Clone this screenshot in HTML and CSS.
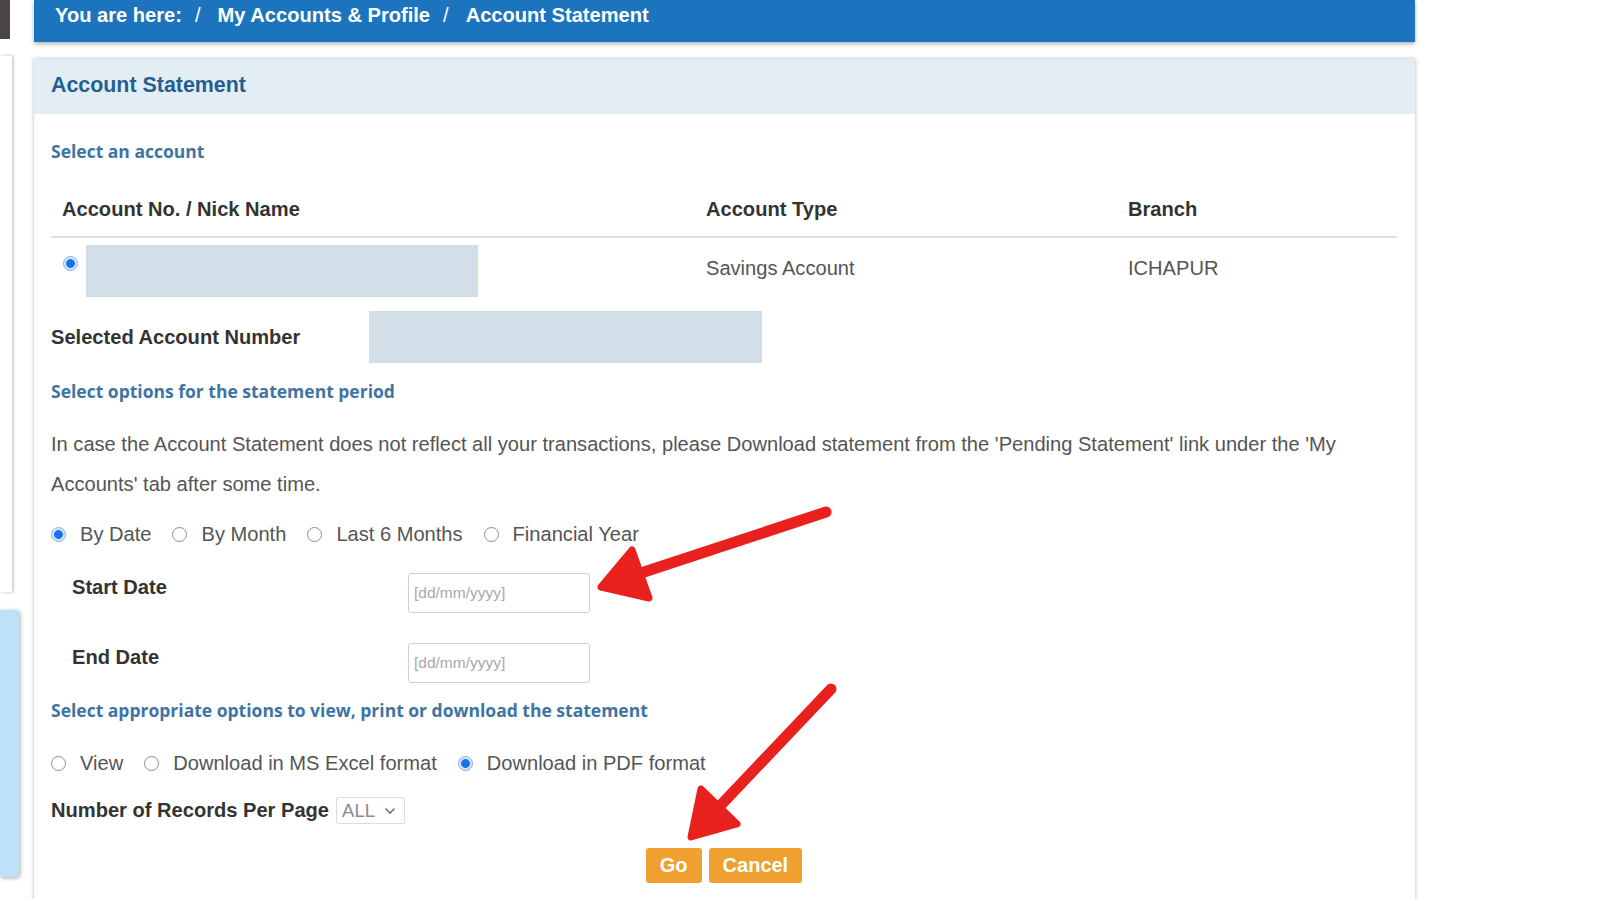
FILE: index.html
```html
<!DOCTYPE html>
<html lang="en">
<head>
    <meta charset="utf-8">
    <meta name="viewport" content="width=device-width, initial-scale=1">
    <title>Account Statement</title>
    <link rel="stylesheet" href="styles.css">
</head>
<body>
    <div class="side">
        <div class="side-top"></div>
        <div class="side-menu"></div>
        <div class="side-info"></div>
    </div>

    <div class="main">
        <div class="crumbs">
            <span>You are here:</span>
            <span class="sep">/</span>
            <span>My Accounts &amp; Profile</span>
            <span class="sep">/</span>
            <span>Account Statement</span>
        </div>

        <div class="card">
            <div class="card-head">Account Statement</div>
            <div class="card-body">
                <div class="subhead first">Select an account</div>

                <div class="acc-table">
                    <div class="th">Account No. / Nick Name</div>
                    <div class="th">Account Type</div>
                    <div class="th">Branch</div>

                    <div class="td acc-cell">
                        <input type="radio" class="radio" name="acc" checked>
                        <div class="masked acc-mask"></div>
                    </div>
                    <div class="td">Savings Account</div>
                    <div class="td">ICHAPUR</div>
                </div>

                <div class="selected-row">
                    <div class="label">Selected Account Number</div>
                    <div class="masked sel-mask"></div>
                </div>

                <div class="subhead">Select options for the statement period</div>

                <p class="note">In case the Account Statement does not reflect all your transactions, please Download statement from the 'Pending Statement' link under the 'My Accounts' tab after some time.</p>

                <div class="opts period">
                    <label class="opt"><input type="radio" class="radio" name="period" checked>By Date</label>
                    <label class="opt"><input type="radio" class="radio" name="period">By Month</label>
                    <label class="opt"><input type="radio" class="radio" name="period">Last 6 Months</label>
                    <label class="opt"><input type="radio" class="radio" name="period">Financial Year</label>
                </div>

                <div class="date-row start">
                    <div class="label">Start Date</div>
                    <input type="text" class="date" placeholder="[dd/mm/yyyy]">
                </div>
                <div class="date-row end">
                    <div class="label">End Date</div>
                    <input type="text" class="date" placeholder="[dd/mm/yyyy]">
                </div>

                <div class="subhead">Select appropriate options to view, print or download the statement</div>

                <div class="opts format">
                    <label class="opt"><input type="radio" class="radio" name="fmt">View</label>
                    <label class="opt"><input type="radio" class="radio" name="fmt">Download in MS Excel format</label>
                    <label class="opt"><input type="radio" class="radio" name="fmt" checked>Download in PDF format</label>
                </div>

                <div class="records">
                    <div class="label">Number of Records Per Page</div>
                    <div class="pick">
                        <span>ALL</span>
                        <svg width="12" height="8" viewBox="0 0 12 8"><path d="M1.5 1.5 L6 6 L10.5 1.5" fill="none" stroke="#777" stroke-width="1.6"/></svg>
                    </div>
                </div>

                <div class="buttons">
                    <button class="btn">Go</button>
                    <button class="btn">Cancel</button>
                </div>
            </div>
        </div>
    </div>

    <!-- red annotation arrows drawn over the page -->
    <svg class="marks" width="1599" height="899" viewBox="0 0 1599 899">
        <g fill="#e8201e" stroke="#e8201e" stroke-linejoin="round" stroke-linecap="round">
            <line x1="826" y1="512" x2="641" y2="573" stroke-width="11"/>
            <polygon points="601,587 632,550 649,598" stroke-width="7"/>
            <line x1="831" y1="689" x2="719" y2="807" stroke-width="11"/>
            <polygon points="691,837 701,789 737,824" stroke-width="7"/>
        </g>
    </svg>
</body>
</html>
```

FILE: styles.css
```css
* {
    box-sizing: border-box;
}
html, body {
    margin: 0;
    height: 100%;
    overflow: hidden;
    background: #fff;
}
body {
    display: flex;
    align-items: flex-start;
    font-family: "Liberation Sans", Arial, sans-serif;
    font-size: 20.1px;
    color: #555;
}
.side {
    width: 19px;
    display: flex;
    flex-direction: column;
    flex-shrink: 0;
}
.side-top {
    width: 10px;
    height: 39px;
    background: #4a4442;
}
.side-menu {
    width: 12px;
    height: 536px;
    margin-top: 17px;
    background: #fff;
    box-shadow: 1px 0 3px rgba(0, 0, 0, 0.3);
}
.side-info {
    width: 19px;
    height: 267px;
    margin-top: 18px;
    background: #bfe1f7;
    border-radius: 0 4px 4px 0;
    box-shadow: 1px 1px 4px rgba(0, 0, 0, 0.35);
}
.main {
    width: 1381px;
    margin-left: 15px;
    flex-shrink: 0;
}
.crumbs {
    height: 42px;
    padding: 3px 0 0 21px;
    background: #1b74bd;
    color: #fff;
    font-weight: bold;
    line-height: 24px;
    display: flex;
    box-shadow: 0 2px 4px rgba(0, 0, 0, 0.3);
}
.crumbs .sep {
    padding: 0 17px 0 13px;
    font-weight: normal;
}
.card {
    margin-top: 17px;
    height: 880px;
    background: #fff;
    box-shadow: 0 0 4px rgba(0, 0, 0, 0.3);
}
.card-head {
    height: 55px;
    padding: 14px 0 0 17px;
    background: #e2eef4;
    color: #245e92;
    font-size: 21.4px;
    font-weight: bold;
    line-height: 24px;
}
.card-body {
    padding: 0 18px 0 17px;
}
.subhead {
    margin-top: 16px;
    font-family: "Open Sans", "Liberation Sans", sans-serif;
    font-size: 17.5px;
    font-weight: bold;
    line-height: 24px;
    color: #3d74a3;
}
.subhead.first {
    margin-top: 25px;
}
.label {
    font-weight: bold;
    color: #333;
}
.acc-table {
    margin-top: 21px;
    display: grid;
    grid-template-columns: 644px 422px 1fr;
}
.th {
    padding: 13px 11px 15px;
    line-height: 24px;
    font-weight: bold;
    color: #333;
    border-bottom: 2px solid #e0e0e0;
}
.td {
    padding: 18px 11px 0;
    line-height: 24px;
}
.acc-cell {
    padding: 7px 0 0 12px;
    display: flex;
    align-items: flex-start;
}
.acc-cell .radio {
    margin-top: 11px;
    margin-right: 8px;
}
.masked {
    background: #d3dfe8;
    height: 52px;
}
.acc-mask {
    width: 392px;
}
.selected-row {
    margin-top: 14px;
    display: flex;
    align-items: center;
}
.selected-row .label {
    width: 318px;
}
.sel-mask {
    width: 393px;
}
.note {
    margin: 21px 0 0;
    line-height: 40px;
    padding-right: 40px;
}
.radio {
    appearance: none;
    -webkit-appearance: none;
    width: 15px;
    height: 15px;
    margin: 0;
    border: 1px solid #8d8d8d;
    border-radius: 50%;
    background: #fff;
    flex-shrink: 0;
}
.radio:checked {
    border: 1.5px solid #7eb0ee;
    background: radial-gradient(circle, #1a73e8 0 4px, #d5e6fb 4.8px);
}
.opts {
    display: flex;
    line-height: 24px;
}
.opt {
    display: inline-flex;
    align-items: center;
    gap: 14px;
    margin-right: 21px;
}
.period {
    margin-top: 18px;
}
.format {
    margin-top: 29px;
}
.date-row {
    display: flex;
    align-items: flex-start;
    padding-left: 21px;
}
.date-row .label {
    width: 336px;
    padding-top: 2px;
    line-height: 24px;
}
.date-row.start {
    margin-top: 27px;
}
.date-row.end {
    margin-top: 30px;
}
.date {
    width: 182px;
    height: 40px;
    border: 1px solid #d0d0d0;
    border-radius: 3px;
    padding: 0 5px;
    font-family: "Liberation Sans", Arial, sans-serif;
    font-size: 15.5px;
}
.date::placeholder {
    color: #a8a8a8;
}
.date-row + .subhead {
    margin-top: 15px;
}
.records {
    margin-top: 22px;
    display: flex;
    align-items: center;
    gap: 7px;
}
.pick {
    width: 69px;
    height: 27px;
    border: 1px solid #dcdcdc;
    border-radius: 2px;
    display: flex;
    align-items: center;
    justify-content: space-between;
    padding: 0 8px 0 5px;
    color: #8a8a8a;
    font-size: 18.5px;
}
.buttons {
    margin-top: 24px;
    display: flex;
    justify-content: center;
    gap: 7px;
}
.btn {
    height: 35px;
    padding: 0 14px;
    border: none;
    border-radius: 3px;
    background: #f0a030;
    color: #fff;
    font-family: "Liberation Sans", Arial, sans-serif;
    font-size: 20px;
    font-weight: bold;
}
.marks {
    position: absolute;
    top: 0;
    left: 0;
    pointer-events: none;
}
```
